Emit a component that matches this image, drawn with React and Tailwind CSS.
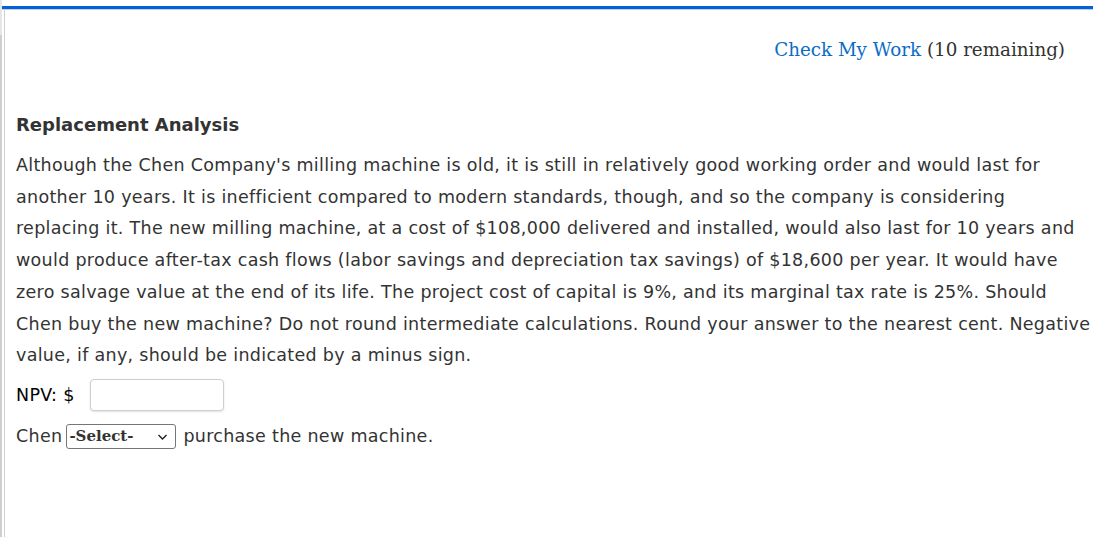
import React from 'react';

const body = { fontFamily: '"DejaVu Sans", Verdana, sans-serif' };
const serif = { fontFamily: '"DejaVu Serif", Georgia, serif' };

const lines = [
    "Although the Chen Company's milling machine is old, it is still in relatively good working order and would last for",
    'another 10 years. It is inefficient compared to modern standards, though, and so the company is considering',
    'replacing it. The new milling machine, at a cost of $108,000 delivered and installed, would also last for 10 years and',
    'would produce after-tax cash flows (labor savings and depreciation tax savings) of $18,600 per year. It would have',
    'zero salvage value at the end of its life. The project cost of capital is 9%, and its marginal tax rate is 25%. Should',
    'Chen buy the new machine? Do not round intermediate calculations. Round your answer to the nearest cent. Negative',
    'value, if any, should be indicated by a minus sign.',
];

const App = () => {
    return (
        <div className="relative h-[537px] w-[1093px] overflow-hidden bg-white text-[#333]" style={body}>
            <div className="absolute left-0 top-0 h-full w-[2px] bg-[#e6e6e6]" />
            <div className="absolute left-0 top-[35px] bottom-0 w-[2px] bg-[#cfcfcf]" />
            <div className="absolute left-[4px] top-[9px] bottom-0 w-px bg-[#d0d0d0]" />

            <div className="h-[6px]" />
            <div className="ml-[2px] h-[3px] bg-[#0061dc]" />
            <div className="ml-[2px] h-px bg-[#c9cfe0]" />

            <div className="flex justify-end pr-[28px] pt-[27px]">
                <div className="text-[18.3px] leading-[26px]" style={serif}>
                    <a href="#" className="text-[#0b6cc7]">Check My Work</a>
                    <span className="text-[#333]"> (10 remaining)</span>
                </div>
            </div>

            <div className="pl-[16px] pt-[50px]">
                <h2 className="text-[18px] font-bold leading-[24px] text-[#333]">Replacement Analysis</h2>
                <p className="mt-[13px] whitespace-nowrap text-[17.5px] leading-[31.7px] tracking-[0.3px]">
                    {lines.map((line, i) => (
                        <React.Fragment key={i}>
                            {line}
                            {i < lines.length - 1 && <br />}
                        </React.Fragment>
                    ))}
                </p>
                <div className="mt-[7px] flex items-center text-[17.5px] tracking-[0.3px] text-black">
                    <span>NPV: $</span>
                    <input
                        type="text"
                        className="ml-[15px] h-[32px] w-[134px] rounded-[4px] border border-[#cfcfcf] bg-white shadow-[0_1px_2px_rgba(0,0,0,0.12)] outline-none"
                    />
                </div>
                <div className="mt-[12px] flex items-center text-[17.5px] tracking-[0.3px]">
                    <span>Chen</span>
                    <div className="relative ml-[4px] flex h-[25px] w-[110px] items-center rounded-[3px] border border-[#767676] bg-white pl-[2px]">
                        <span className="text-[15px] font-bold tracking-normal text-[#333]" style={serif}>-Select-</span>
                        <svg className="absolute right-[7px] top-[8px]" width="11" height="8" viewBox="0 0 11 8" fill="none">
                            <path d="M1.5 2 L5.5 6 L9.5 2" stroke="#222" strokeWidth="1.4" />
                        </svg>
                    </div>
                    <span className="ml-[7px]">purchase the new machine.</span>
                </div>
            </div>
        </div>
    );
};

export default App;
